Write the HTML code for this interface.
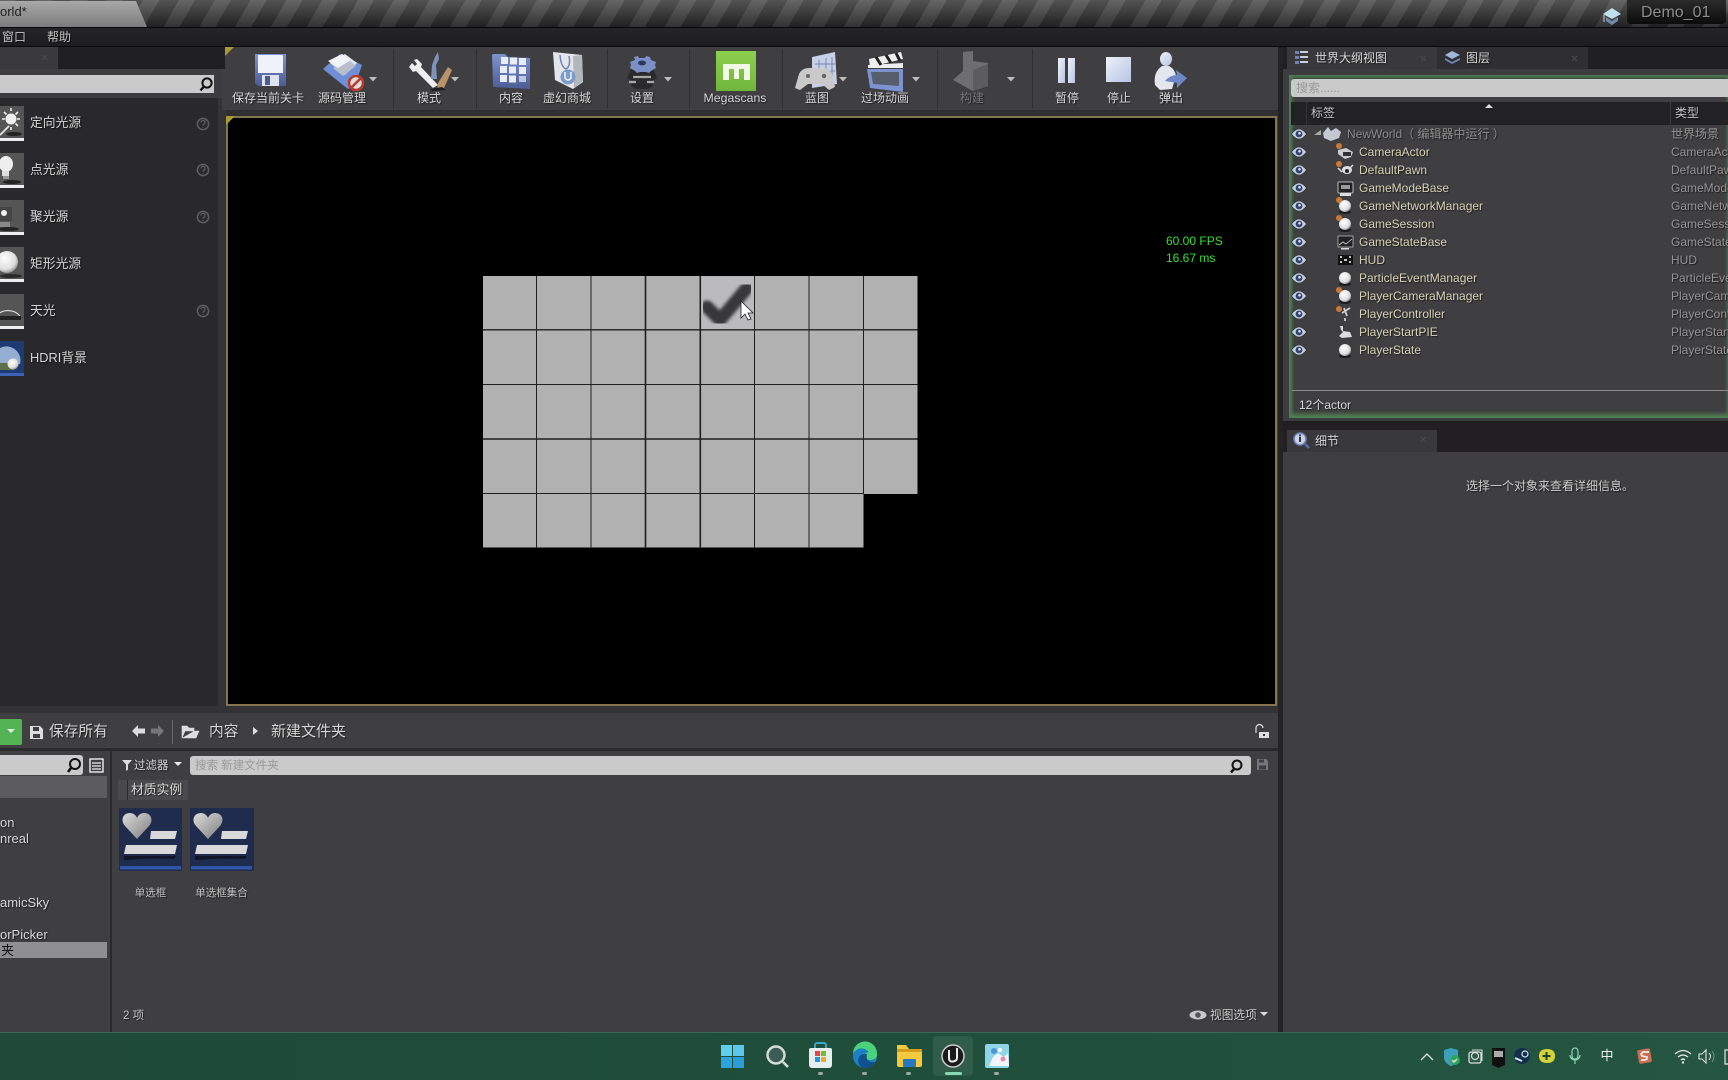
<!DOCTYPE html>
<html lang="zh"><head><meta charset="utf-8"><title>UE</title>
<style>
html,body{margin:0;padding:0;width:1728px;height:1080px;overflow:hidden;background:#3f3e40}
body{font-family:"Liberation Sans","Noto Sans CJK SC",sans-serif;font-size:12px;color:#d6d6d6}
#w{position:absolute;left:0;top:0;width:1728px;height:1080px;overflow:hidden;filter:blur(.35px)}
.b{position:absolute}
.t{position:absolute;white-space:nowrap;line-height:16px;margin-top:-8px;text-shadow:1px 1px 1px rgba(0,0,0,.55)}
.c{transform:translateX(-50%)}
.r{color:#d6d1b5;font-size:12px}
.y{color:#959595;font-size:12px}
svg{position:absolute;left:0;top:0}
</style></head><body><div id="w">
<!-- title bar -->
<div class="b" style="left:0;top:0;width:1728px;height:27px;background:repeating-linear-gradient(120deg,rgba(255,255,255,.07) 0 14px,rgba(0,0,0,.08) 14px 31px),linear-gradient(#5a5a5a,#232323)"></div>
<div class="b" style="left:0;top:27px;width:1728px;height:1px;background:#080808"></div>
<div class="b" style="left:0;top:28px;width:1728px;height:18px;background:linear-gradient(#252426,#1d1c1e)"></div>
<div class="b" style="left:0;top:46px;width:1728px;height:1px;background:#0a0a0a"></div>
<div class="b" style="left:0;top:1px;width:147px;height:26px;background:linear-gradient(#a8a8a8,#7c7c7c);clip-path:polygon(0 0,136px 0,147px 100%,0 100%)"></div>
<div class="b" style="left:1627px;top:0;width:99px;height:24px;border-radius:0 0 4px 4px;background:linear-gradient(#2b2b2b,#0c0c0c)"></div>
<!-- left -->
<div class="b" style="left:0;top:47px;width:225px;height:22px;background:#201f21"></div>
<div class="b" style="left:0;top:47px;width:58px;height:22px;background:#3a393b"></div>
<div class="b" style="left:0;top:69px;width:222px;height:643px;background:#3d3c3e"></div>
<div class="b" style="left:0;top:75px;width:214px;height:18px;background:#cbcacb"></div>
<div class="b" style="left:0;top:98px;width:218px;height:608px;background:#29282a"></div>
<div class="b" style="left:218px;top:98px;width:4px;height:608px;background:#343335"></div>
<!-- toolbar -->
<div class="b" style="left:225px;top:47px;width:1053px;height:63px;background:#3f3e40"></div>
<div class="b" style="left:225px;top:110px;width:1053px;height:6px;background:#2f2e30"></div>
<div class="b" style="left:393px;top:49px;width:1px;height:59px;background:#2f2e30"></div>
<div class="b" style="left:476px;top:49px;width:1px;height:59px;background:#2f2e30"></div>
<div class="b" style="left:607px;top:49px;width:1px;height:59px;background:#2f2e30"></div>
<div class="b" style="left:689px;top:49px;width:1px;height:59px;background:#2f2e30"></div>
<div class="b" style="left:782px;top:49px;width:1px;height:59px;background:#2f2e30"></div>
<div class="b" style="left:937px;top:49px;width:1px;height:59px;background:#2f2e30"></div>
<div class="b" style="left:1032px;top:49px;width:1px;height:59px;background:#2f2e30"></div>
<!-- viewport -->
<div class="b" style="left:226px;top:116px;width:1051px;height:590px;box-sizing:border-box;border:2px solid #85754e;background:#000"></div>
<div class="b" style="left:222px;top:110px;width:4px;height:604px;background:#343335"></div>
<div class="b" style="left:1278px;top:47px;width:5px;height:985px;background:#232224"></div>
<!-- right -->
<div class="b" style="left:1283px;top:47px;width:445px;height:22px;background:#201f21"></div>
<div class="b" style="left:1287px;top:47px;width:150px;height:22px;background:#39383a"></div>
<div class="b" style="left:1437px;top:47px;width:151px;height:22px;background:#2f2e30"></div>
<div class="b" style="left:1283px;top:69px;width:445px;height:352px;background:#3d3c3e"></div>
<div class="b" style="left:1289px;top:75px;width:439px;height:343px;background:#3f3e40;box-shadow:inset 3px 0 3px #4f7f55,inset 0 3px 2px #47704c,inset 0 -4px 4px #4f8453"></div>
<div class="b" style="left:1291px;top:79px;width:437px;height:18px;background:#cbcacb;border-radius:3px 0 0 3px"></div>
<div class="b" style="left:1291px;top:102px;width:437px;height:23px;background:#222123"></div>
<div class="b" style="left:1306px;top:102px;width:1px;height:23px;background:#323133"></div>
<div class="b" style="left:1670px;top:102px;width:1px;height:23px;background:#3a393b"></div>
<div class="b" style="left:1292px;top:390px;width:436px;height:1px;background:#8b8b8b"></div>
<div class="b" style="left:1283px;top:421px;width:445px;height:31px;background:#211f22"></div>
<div class="b" style="left:1287px;top:430px;width:150px;height:22px;background:#39383a"></div>
<div class="b" style="left:1283px;top:452px;width:445px;height:580px;background:#3f3e40"></div>
<!-- content browser -->
<div class="b" style="left:0;top:706px;width:1278px;height:7px;background:#333234"></div>
<div class="b" style="left:0;top:713px;width:1278px;height:35px;background:#3f3e40"></div>
<div class="b" style="left:0;top:748px;width:1278px;height:3px;background:#2a292b"></div>
<div class="b" style="left:0;top:751px;width:1278px;height:281px;background:#3f3e40"></div>
<div class="b" style="left:110px;top:751px;width:2px;height:281px;background:#2a292b"></div>
<div class="b" style="left:0;top:719px;width:22px;height:26px;background:#54b354;border-radius:0 2px 2px 0"></div>
<div class="b" style="left:172px;top:720px;width:1px;height:24px;background:#6a696b"></div>
<div class="b" style="left:0;top:755px;width:83px;height:20px;background:#cbcacb;border-radius:0 3px 3px 0"></div>
<div class="b" style="left:0;top:776px;width:107px;height:22px;background:#5c5b5d"></div>
<div class="b" style="left:0;top:942px;width:107px;height:16px;background:#8f8e90"></div>
<div class="b" style="left:190px;top:756px;width:1061px;height:19px;background:#cbcacb;border-radius:3px"></div>
<div class="b" style="left:118px;top:780px;width:70px;height:20px;background:#4a494b"></div>
<div class="b" style="left:127px;top:780px;width:1px;height:20px;background:#29282a"></div>
<!-- taskbar -->
<div class="b" style="left:0;top:1032px;width:1728px;height:48px;background:linear-gradient(90deg,#1e4a37,#1f4e3a 50%,#245642);border-top:1px solid #3a6a55;box-sizing:border-box"></div>
<div class="b" style="left:933px;top:1036px;width:40px;height:40px;border-radius:4px;background:#2f5d4a"></div>
<div class="b" style="left:945px;top:1072px;width:17px;height:3px;border-radius:2px;background:#84d8b4"></div>

<svg width="1728" height="1080" viewBox="0 0 1728 1080">
<defs>
<linearGradient id="bl" x1="0" y1="0" x2="0" y2="1"><stop offset="0" stop-color="#7d93cf"/><stop offset="1" stop-color="#4b5d95"/></linearGradient>
<linearGradient id="pa" x1="0" y1="0" x2="1" y2="1"><stop offset="0" stop-color="#eef1fa"/><stop offset="1" stop-color="#b7c4e3"/></linearGradient>
<linearGradient id="gr" x1="0" y1="0" x2="0" y2="1"><stop offset="0" stop-color="#8ccf4f"/><stop offset="1" stop-color="#70b63b"/></linearGradient>
<radialGradient id="ba" cx=".4" cy=".35" r=".7"><stop offset="0" stop-color="#fff"/><stop offset=".7" stop-color="#ddd"/><stop offset="1" stop-color="#888"/></radialGradient>
<linearGradient id="hr" x1="0" y1="0" x2="1" y2="1"><stop offset="0" stop-color="#dcdcdc"/><stop offset="1" stop-color="#7d7d7d"/></linearGradient>
<filter id="bl1"><feGaussianBlur stdDeviation="1.600"/></filter>
<g id="eye"><path d="M-7.500 0Q0-10 7.500 0Q0 10-7.500 0Z" fill="#c4cee2" stroke="#222" stroke-width=".6"/><circle r="3.400" fill="#30426f"/><circle r="1.300" cx=".5" cy="-.7" fill="#dfe6f5"/></g>
<g id="ball"><ellipse cy="6" cx="0" rx="6" ry="2" fill="#1c1c1c"/><circle r="6" fill="url(#ba)"/></g>
<path id="arr" d="M-4-2H4L0 2.500Z" fill="#bdbdbd"/>
<g id="help"><circle r="5.600" fill="none" stroke="#5e5d5f" stroke-width="1.500"/><path d="M-2-1.500A2 2 0 1 1 .6.3Q0 .7 0 2M0 3.200v.8" fill="none" stroke="#5e5d5f" stroke-width="1.200"/></g>
</defs>

<path d="M225 47h9l-9 9Z" fill="#a99a33"/><path d="M226 116h9l-9 9Z" fill="#a99a33"/>
<path d="M42 55l5 5m0-5l-5 5" stroke="#4a494b" stroke-width="1.200"/>
<circle cx="207" cy="83" r="4.600" fill="none" stroke="#111" stroke-width="2"/><path d="M203.500 87l-3 3.500" stroke="#111" stroke-width="2.400"/>

<!-- left thumbs -->
<rect x="0" y="106" width="24" height="35" fill="#555"/><rect x="0" y="138" width="24" height="3" fill="#eee"/>
<circle cx="11" cy="119" r="5.500" fill="#eee"/><path d="M11 108v3M11 127v3M20 119h-3M2 119h3M4 112l2.500 2.500M18 112l-2.500 2.500M18 126l-2.500-2.500M0 135l9-9" stroke="#eee" stroke-width="1.600"/><ellipse cx="14" cy="134" rx="8" ry="2" fill="#222"/>
<rect x="0" y="153" width="24" height="35" fill="#555"/><rect x="0" y="185" width="24" height="3" fill="#eee"/>
<ellipse cx="6" cy="164" rx="7" ry="8" fill="#eee"/><rect x="2" y="171" width="7" height="5" fill="#ddd"/><rect x="3" y="176" width="6" height="3" fill="#999"/><ellipse cx="12" cy="182" rx="9" ry="2" fill="#222"/>
<rect x="0" y="200" width="24" height="35" fill="#555"/><rect x="0" y="232" width="24" height="3" fill="#eee"/>
<rect x="0" y="207" width="12" height="14" fill="#333" opacity=".5"/><circle cx="4" cy="213" r="3" fill="#eee"/><path d="M0 222h10v5H0z" fill="#888"/><ellipse cx="8" cy="229" rx="11" ry="2" fill="#222"/>
<rect x="0" y="247" width="24" height="35" fill="#555"/><rect x="0" y="279" width="24" height="3" fill="#eee"/>
<circle cx="7" cy="262" r="11" fill="url(#ba)"/><ellipse cx="11" cy="276" rx="11" ry="2" fill="#2a2a2a"/>
<rect x="0" y="294" width="24" height="35" fill="#555"/><rect x="0" y="326" width="24" height="3" fill="#eee"/>
<path d="M-4 316a16 16 0 0 1 24 0" fill="none" stroke="#ddd" stroke-width="1.200"/><rect x="0" y="316" width="21" height="4" fill="#222"/>
<rect x="0" y="341" width="24" height="35" fill="#1d3a72"/><rect x="0" y="373" width="24" height="3" fill="#3d62b8"/>
<path d="M0 348a14 14 0 0 1 20 16H0Z" fill="#93aed0"/><rect x="0" y="363" width="14" height="7" fill="#5b7049"/><circle cx="13" cy="364" r="5.500" fill="url(#ba)"/>
<use href="#help" x="203" y="124"/><use href="#help" x="203" y="170"/><use href="#help" x="203" y="217"/><use href="#help" x="203" y="311"/>

<!-- save -->
<path d="M255 54h31v32h-28l-3-3Z" fill="url(#bl)"/><path d="M258 55h24l1 1v17h-25Z" fill="#f0f2f9"/><rect x="262" y="75" width="17" height="11" fill="#dfe3ee"/><rect x="265" y="76" width="5" height="9" fill="#4b5d95"/>
<!-- source -->
<path d="M323 69l17-15 22 11-7 20-7 4Z" fill="#6f90d8"/><path d="M330 63l15-9 12 9-12 12Z" fill="#e3e6ec"/><path d="M333 68l15-9 8 7-13 10Z" fill="#b8bfcc"/><path d="M328 61l14-7 9 6-13 8Z" fill="#f2f3f6"/>
<circle cx="356" cy="83" r="7" fill="#dcdcdc" stroke="#b83c2c" stroke-width="2.600"/><path d="M351 88l10-10" stroke="#b83c2c" stroke-width="2.600"/>
<use href="#arr" x="373" y="79"/>
<!-- modes -->
<path d="M412 63l-3 4 4 5 3-1 17 17 5-3-17-18 1-3-5-5-3 1 3 4-2 2Z" fill="#eee"/>
<path d="M431 79l1-14 3-8 3-5 1 7-3 6 1 14Z" fill="#7d93b8"/><path d="M438 83l10-16 4 3-8 18-7 2Z" fill="#b9946a"/><path d="M430 89l12-2 4 3-14 1Z" fill="#1e1e1e"/>
<use href="#arr" x="455" y="79"/>
<!-- content -->
<path d="M492 55l1-1h12l3 3 22 1v31l-37-2Z" fill="url(#bl)"/><g fill="#e8ecf6"><rect x="501" y="57" width="7" height="7"/><rect x="510" y="57.500" width="7" height="7"/><rect x="519" y="58" width="7" height="7"/><rect x="500" y="66" width="7" height="7"/><rect x="509" y="66.500" width="7" height="7"/><rect x="519" y="67" width="7" height="7"/><rect x="500" y="75" width="7" height="7"/><rect x="509" y="75.500" width="7" height="7"/><rect x="519" y="76" width="7" height="6" opacity=".7"/></g>
<!-- market -->
<path d="M553 52l29 3 1 27-10 7-18-9Z" fill="#e3e5ea"/><path d="M573 56l1 32 9-7-1-26Z" fill="#b3b6bd"/><circle cx="568" cy="77" r="7.500" fill="#7d9cc9"/><path d="M565 72v6q3 4 6 0v-6" fill="none" stroke="#eef2f8" stroke-width="1.500"/><path d="M560 55q1 12 6 14 5-3 3-13" fill="none" stroke="#6e83b4" stroke-width="1.500"/>
<!-- settings -->
<path d="M631 69l-4 9 5 3-1 5 5 3h12l5-3-1-5 5-3-4-9Z" fill="#2a2a2c"/><path d="M633 77h18M629 82h7M647 82h7" stroke="#a8a8a8" stroke-width="2.200"/>
<path d="M634 57l4-1 1 2h6l1-2 4 1 1 3 5 2-1 3 1 3-5 3-2 2-3-1h-6l-3 1-2-2-5-3 1-3-1-3 5-2Z" fill="#7a90c6"/><ellipse cx="642" cy="63" rx="4" ry="2.500" fill="#2d3a5e"/>
<use href="#arr" x="668" y="79"/>
<!-- Megascans -->
<rect x="716" y="51" width="40" height="40" fill="url(#gr)"/><path d="M723 64h27v16h-6V69h-5v10h-5V69h-5v11h-6Z" fill="#f2f7e6"/>
<!-- blueprint -->
<path d="M812 57l23-5 2 32-25 4Z" fill="#c7d0e6"/><path d="M819 60v18M826 58v20M832 57v20M815 64h20M815 71h20" stroke="#7486b4" stroke-width=".9"/>
<path d="M799 74q3-6 10-6h14q7 0 9 6l3 13-6 3-7-6h-14l-8 6-5-2Z" fill="#c9c9c9"/><circle cx="808" cy="76" r="2" fill="#666"/><circle cx="824" cy="76" r="2.200" fill="#666"/>
<use href="#arr" x="843" y="79"/>
<!-- cinematic -->
<path d="M867 69h36v23l-33-4Z" fill="#7d93cf"/><path d="M871 72h28v14l-26-2Z" fill="#565d6b"/><path d="M869 59l32-7 2 7-33 8ZM868 65l35-2v5h-35Z" fill="#eee"/><path d="M876 57l5 8M886 55l5 8M896 53l4 8" stroke="#222" stroke-width="3"/>
<use href="#arr" x="916" y="79"/>
<!-- build -->
<path d="M963 52l10-1v10l15 2v23l-15 5-20-11 10-9Z" fill="#6e6d70"/><path d="M973 70v21l15-5V64Z" fill="#5c5b5e"/>
<use href="#arr" x="1011" y="79"/>
<!-- pause stop -->
<rect x="1058" y="58" width="7" height="25" fill="url(#pa)"/><rect x="1068" y="58" width="7" height="25" fill="url(#pa)"/>
<rect x="1106" y="57" width="25" height="25" fill="url(#pa)"/>
<!-- eject -->
<ellipse cx="1166" cy="59" rx="6" ry="7" fill="url(#pa)"/><path d="M1155 85q-2-13 7-19h7q6 3 7 10l-4 13-12 1Z" fill="#e3e6ef"/><path d="M1165 81q5-6 12-6l-1-5 11 8-10 10v-5q-6-1-12-2Z" fill="#6e87c6"/>

<!-- viewport grid -->
<rect x="483" y="276" width="434.500" height="271.500" fill="#b1b1b1"/>
<rect x="863.500" y="494" width="55" height="55" fill="#000"/>
<rect x="701" y="277" width="53" height="52" fill="#bbbbbe"/>
<g stroke="#1f1f1f" stroke-width="1">
<path d="M536.500 276v272M591 276v272"/><path d="M645.500 276v272M700.300 276v272" stroke-width="1.600"/><path d="M754.500 276v272M809 276v272M863.500 276v218"/>
<path d="M483 329.800h434.500" stroke-width="1.400"/><path d="M483 384.500h434.500"/><path d="M483 439h434.500" stroke-width="1.400"/><path d="M483 493.500h381"/>
</g>
<path d="M707 307l13 13 27-32" fill="none" stroke="#38383b" stroke-width="13" stroke-linecap="round" filter="url(#bl1)"/>
<path d="M741 301v17l4-4 3 6 3-1-3-6h5Z" fill="#fff" stroke="#222" stroke-width=".8"/>

<!-- cap -->
<path d="M1603 14l9-6 9 6-9 5Z" fill="#bfe0ec"/><path d="M1606 17v4l6 4 6-4v-4l-6 4Z" fill="#6e8aab"/><path d="M1604 15v7" stroke="#ccc"/>
<!-- tab icons -->
<g fill="#6d83b8"><rect x="1295" y="51" width="4" height="3"/><rect x="1295" y="56" width="4" height="3"/><rect x="1295" y="61" width="4" height="3"/></g><g fill="#c9cfdb"><rect x="1300" y="51" width="8" height="2"/><rect x="1300" y="56" width="8" height="2"/><rect x="1300" y="61" width="8" height="2"/></g>
<path d="M1445 55l7-4 8 4-8 4Z" fill="#9fb7dc"/><path d="M1445 58l7 4 8-4v2l-8 4-7-4Z" fill="#6f88b8"/>
<path d="M1421 56l5 5m0-5l-5 5" stroke="#4a494b" stroke-width="1.200"/>
<path d="M1572 56l5 5m0-5l-5 5" stroke="#4a494b" stroke-width="1.200"/>
<path d="M1485 108l4-4 4 4Z" fill="#ddd"/>
<!-- details tab icon -->
<circle cx="1300" cy="439" r="6" fill="#c7d0e6" stroke="#6d83b8" stroke-width="1.500"/><path d="M1305 444l4 4" stroke="#5870a8" stroke-width="2.500"/><rect x="1299" y="437" width="2" height="5" fill="#333"/><rect x="1299" y="434.500" width="2" height="1.800" fill="#333"/>
<path d="M1421 437l5 5m0-5l-5 5" stroke="#4a494b" stroke-width="1.200"/>
<!-- outliner rows -->
<use href="#eye" x="1299" y="134"/><use href="#eye" x="1299" y="152"/><use href="#eye" x="1299" y="170"/><use href="#eye" x="1299" y="188"/><use href="#eye" x="1299" y="206"/><use href="#eye" x="1299" y="224"/><use href="#eye" x="1299" y="242"/><use href="#eye" x="1299" y="260"/><use href="#eye" x="1299" y="278"/><use href="#eye" x="1299" y="296"/><use href="#eye" x="1299" y="314"/><use href="#eye" x="1299" y="332"/><use href="#eye" x="1299" y="350"/>
<path d="M1314 135l7-5v5Z" fill="#aaa"/>
<path d="M1323 133l5-6 3 4 5-3 5 4-2 6-8 3-7-3Z" fill="#c4c8d2"/>
<path d="M1338 150l8-2 7 4-2 5-6 2-7-5Z" fill="#ccc"/><circle cx="1339" cy="146" r="3" fill="#c77a3a"/><rect x="1343" y="152" width="8" height="4" fill="#333"/>
<circle cx="1339" cy="164" r="3" fill="#c77a3a"/><ellipse cx="1347" cy="170" rx="5" ry="4" fill="#ddd"/><circle cx="1347" cy="171" r="2" fill="#222"/><path d="M1338 168l4 4M1353 165l-3 3" stroke="#ddd" stroke-width="1.500"/>
<rect x="1338" y="182" width="15" height="11" rx="1" fill="#222" stroke="#bbb"/><rect x="1341" y="185" width="9" height="4" fill="#999"/><rect x="1340" y="193" width="11" height="3" fill="#ddd"/>
<use href="#ball" x="1345" y="206"/><circle cx="1339" cy="200" r="3" fill="#c77a3a"/><use href="#ball" x="1345" y="224"/><circle cx="1339" cy="218" r="3" fill="#c77a3a"/>
<rect x="1338" y="236" width="15" height="11" fill="#222" stroke="#bbb" stroke-width=".8"/><path d="M1339 245l4-3 3 2 6-5" fill="none" stroke="#ddd" stroke-width=".8"/><rect x="1341" y="248" width="8" height="1.500" fill="#ddd"/>
<rect x="1338" y="255" width="15" height="10" fill="#111"/><path d="M1340 257h2M1349 257h2M1340 262h2M1349 262h2M1344 260h3" stroke="#fff" stroke-width="1.500"/>
<use href="#ball" x="1345" y="278"/><use href="#ball" x="1345" y="296"/><circle cx="1339" cy="290" r="3" fill="#c77a3a"/>
<circle cx="1339" cy="309" r="3" fill="#c77a3a"/><path d="M1342 313l8-5M1344 308l3 8M1345 318v3" stroke="#ccc" stroke-width="1.800"/>
<path d="M1340 326h3v5l7 1 2 5-10 1-3-2 4-4-2-2Z" fill="#ddd"/>
<use href="#ball" x="1345" y="350"/>
<!-- content browser icons -->
<path d="M7 729h8l-4 4Z" fill="#dff3df"/>
<path d="M30 726h10l3 3v10H30Zm3 1v4h6v-4Zm0 7v4h7v-4Z" fill="#ddd" fill-rule="evenodd"/>
<path d="M132 731l6-6v3.500h7v5h-7v3.500Z" fill="#ddd"/><path d="M164 731l-6-6v3.500h-7v5h7v3.500Z" fill="#777"/>
<path d="M182 738v-12h5l2 2h5v3h-9l-3 7h14l3-7h-5" fill="#ddd" stroke="#ddd" stroke-width=".6"/><path d="M253 727l5 4-5 4Z" fill="#ddd"/>
<path d="M1256 733v-5a3.500 3.500 0 0 1 7 0" fill="none" stroke="#ddd" stroke-width="1.200"/><rect x="1259" y="732" width="10" height="6" fill="#ddd"/><rect x="1263" y="734" width="2" height="2" fill="#333"/>
<circle cx="75" cy="764" r="5" fill="none" stroke="#111" stroke-width="2"/><path d="M71 768l-3 4" stroke="#111" stroke-width="2.600"/>
<rect x="90" y="759" width="13" height="13" fill="none" stroke="#eee" stroke-width="1.400"/><path d="M92 763h9M92 766h9M92 769h9" stroke="#eee" stroke-width="1.200"/>
<path d="M122 760h10l-4 4.500v5l-2 1.500v-6.500Z" fill="#ddd"/><path d="M174 762h8l-4 4Z" fill="#eee"/>
<circle cx="1237" cy="765" r="4.500" fill="none" stroke="#111" stroke-width="2"/><path d="M1234 769l-3 3.500" stroke="#111" stroke-width="2.500"/>
<path d="M1257 759h9l2 2v9h-11Zm2 .500v3h5v-3Zm0 6v4h7v-4Z" fill="#77767a" fill-rule="evenodd"/>
<!-- thumbs -->
<rect x="119" y="808" width="63" height="63" fill="#1f2c4d"/><rect x="120" y="866" width="61" height="3.500" fill="#2f55a8"/>
<rect x="190" y="808" width="64" height="63" fill="#1f2c4d"/><rect x="191" y="866" width="61" height="3.500" fill="#2f55a8"/>
<g id="th"><path d="M137 839L125 826C120 820 123 813 130 813C133 813 136 815 137 818C138 815 141 813 144 813C151 813 154 820 149 826Z" fill="url(#hr)"/><path d="M151 831h26l-2 8h-25Z" fill="#d9d9dc"/><path d="M126 845h51l-2 9h-51Z" fill="#d9d9dc"/><path d="M124 856h52l-2 3q-25-1-50 1Z" fill="#101626"/></g>
<use href="#th" x="71"/>
<ellipse cx="1198" cy="1015" rx="8.500" ry="4.500" fill="#c9c9c9"/><circle cx="1198" cy="1015" r="2.800" fill="#555"/>
<path d="M1260 1012h8l-4 4Z" fill="#ddd"/>
<rect x="1278" y="706" width="5" height="326" fill="#232224"/>
<!-- taskbar icons -->
<rect x="721" y="1045" width="11" height="11" fill="#5dd0f0"/><rect x="733" y="1045" width="11" height="11" fill="#5cc8ec"/><rect x="721" y="1057" width="11" height="11" fill="#2ba6dc"/><rect x="733" y="1057" width="11" height="11" fill="#2a9ed8"/>
<circle cx="776" cy="1055" r="8.500" fill="#3c5d55" stroke="#d8dcd8" stroke-width="2.400"/><path d="M783 1062l5 5" stroke="#d8dcd8" stroke-width="2.600"/>
<path d="M811 1048h19a2 2 0 0 1 2 2v15a3 3 0 0 1-3 3h-17a3 3 0 0 1-3-3v-15a2 2 0 0 1 2-2Z" fill="#e6eef0"/><path d="M815 1048v-3a2 2 0 0 1 2-2h7a2 2 0 0 1 2 2v3" fill="none" stroke="#36a6c6" stroke-width="2"/>
<rect x="815" y="1051" width="5" height="5" fill="#e44"/><rect x="821" y="1051" width="5" height="5" fill="#7b3"/><rect x="815" y="1057" width="5" height="5" fill="#29d"/><rect x="821" y="1057" width="5" height="5" fill="#ea3"/>
<circle cx="865" cy="1056" r="12" fill="#1d80c4"/><path d="M853 1054a12 12 0 0 1 24-1q1 6-6 7-7 0-7-4 0-3 5-4-5-5-11-3-4 2-5 5Z" fill="#49d17b"/><path d="M858 1060q2-7 9-6-2 9 8 8-3 6-10 6-6 0-7-8Z" fill="#11508c"/>
<path d="M897 1045h9l3 4h13v16a2 2 0 0 1-2 2h-21a2 2 0 0 1-2-2Z" fill="#f4c93c"/><rect x="897" y="1049" width="25" height="3" fill="#d29d1e"/><rect x="903" y="1059" width="13" height="8" rx="1" fill="#2479c2"/>
<circle cx="953" cy="1056" r="11" fill="#1a1a1a" stroke="#ccc" stroke-width="1.500"/><path d="M949 1050v8q0 4 4 3.500t4-3.500v-10" fill="none" stroke="#eee" stroke-width="2"/>
<rect x="985" y="1044" width="24" height="24" rx="2" fill="#8fd5e8"/><path d="M989 1066l4-9 5-4 6 4 4-4 1 13Z" fill="#f2f6fc"/><circle cx="994" cy="1051" r="3" fill="#4b97d8"/><circle cx="1003" cy="1059" r="2.500" fill="#e88ba8"/><circle cx="1000" cy="1050" r="2" fill="#fff"/>
<g fill="#9aa9a3"><rect x="818" y="1072" width="5" height="3" rx="1.500"/><rect x="862" y="1072" width="5" height="3" rx="1.500"/><rect x="906" y="1072" width="5" height="3" rx="1.500"/><rect x="994" y="1072" width="5" height="3" rx="1.500"/></g>
<!-- tray -->
<path d="M1421 1060l6-6 6 6" fill="none" stroke="#e6e6e6" stroke-width="1.300"/>
<path d="M1444 1050l7-2 7 2v7q0 6-7 9-7-3-7-9Z" fill="#3d9fb9"/><circle cx="1455" cy="1060" r="5" fill="#2da55a"/><path d="M1452 1060l2 2 3-3" stroke="#fff" fill="none" stroke-width="1.200"/>
<rect x="1469" y="1052" width="12" height="11" rx="2" fill="#2b5a47" stroke="#ddd" stroke-width="1.300"/><circle cx="1475" cy="1056" r="3.500" fill="none" stroke="#ddd" stroke-width="1.200"/><path d="M1472 1050h10v11" fill="none" stroke="#ddd"/>
<path d="M1492 1048h13v17l-6.500 3-6.500-3Z" fill="#101010"/><rect x="1494" y="1051" width="9" height="6" fill="#ddd" opacity=".75"/>
<circle cx="1522" cy="1056" r="8" fill="#10304e"/><circle cx="1525" cy="1054" r="3" fill="none" stroke="#d9e4ee" stroke-width="1.200"/><path d="M1515 1058l7 3" stroke="#d9e4ee" stroke-width="2"/>
<path d="M1539 1056q0-7 8-7 8 0 8 7 0 7-8 7-8 0-8-7Z" fill="#d3d337"/><path d="M1546.500 1052v8M1542.500 1056h8" stroke="#1f3f2f" stroke-width="2"/>
<rect x="1572" y="1048" width="6" height="11" rx="3" fill="none" stroke="#8fd6b4" stroke-width="1.200"/><path d="M1570 1055a5 5 0 0 0 10 0M1575 1060v4" fill="none" stroke="#8fd6b4" stroke-width="1.200"/>
<rect x="1638" y="1049" width="13" height="14" rx="2" fill="#c96d53" transform="rotate(-10 1645 1056)"/><path d="M1649 1052h-6l-2 2 1 2 5 1v2l-2 1h-4" fill="none" stroke="#f2ece7" stroke-width="1.700"/>
<path d="M1675 1054q8-7 16 0M1678 1057q5-4 10 0M1681 1060q2-2 4 0" fill="none" stroke="#e6e6e6" stroke-width="1.300"/><circle cx="1683" cy="1062.500" r="1.200" fill="#e6e6e6"/>
<path d="M1699 1054h3l4-4v13l-4-4h-3Z" fill="none" stroke="#e6e6e6" stroke-width="1.100"/><path d="M1709 1053q3 3 0 7" fill="none" stroke="#e6e6e6"/><path d="M1712 1051q4 5 0 11" fill="none" stroke="#6f8f80"/>
<path d="M1725 1050h5v14h-5Z" fill="none" stroke="#e6e6e6" stroke-width="1.200"/>
</svg>

<!-- texts -->
<div class="t" style="left:0;top:12px;color:#222;font-size:13px;text-shadow:none">orld*</div>
<div class="t" style="left:1641px;top:13px;color:#8d8d8d;font-size:16px">Demo_01</div>
<div class="t" style="left:2px;top:37px;color:#c4c4c4">窗口</div>
<div class="t" style="left:47px;top:37px;color:#c4c4c4">帮助</div>
<div class="t" style="left:30px;top:123px;font-size:12.800px">定向光源</div>
<div class="t" style="left:30px;top:170px;font-size:12.800px">点光源</div>
<div class="t" style="left:30px;top:217px;font-size:12.800px">聚光源</div>
<div class="t" style="left:30px;top:264px;font-size:12.800px">矩形光源</div>
<div class="t" style="left:30px;top:311px;font-size:12.800px">天光</div>
<div class="t" style="left:30px;top:358px;font-size:12.800px">HDRI背景</div>
<div class="t c" style="left:268px;top:98px">保存当前关卡</div>
<div class="t c" style="left:342px;top:98px">源码管理</div>
<div class="t c" style="left:429px;top:98px">模式</div>
<div class="t c" style="left:511px;top:98px">内容</div>
<div class="t c" style="left:567px;top:98px">虚幻商城</div>
<div class="t c" style="left:642px;top:98px">设置</div>
<div class="t c" style="left:735px;top:98px;font-size:12.300px">Megascans</div>
<div class="t c" style="left:817px;top:98px">蓝图</div>
<div class="t c" style="left:885px;top:98px">过场动画</div>
<div class="t c" style="left:972px;top:98px;color:#777">构建</div>
<div class="t c" style="left:1067px;top:98px">暂停</div>
<div class="t c" style="left:1119px;top:98px">停止</div>
<div class="t c" style="left:1171px;top:98px">弹出</div>
<div class="t" style="left:1166px;top:241px;color:#35e035;text-shadow:none">60.00 FPS</div>
<div class="t" style="left:1166px;top:258px;color:#35e035;text-shadow:none">16.67 ms</div>
<div class="t" style="left:1315px;top:58px">世界大纲视图</div>
<div class="t" style="left:1466px;top:58px">图层</div>
<div class="t" style="left:1296px;top:88px;color:#999;text-shadow:none">搜索......</div>
<div class="t" style="left:1311px;top:113px;color:#c4c4c4">标签</div>
<div class="t" style="left:1675px;top:113px;color:#c4c4c4">类型</div>
<div class="t" style="left:1347px;top:134px;color:#8c8c8c;font-size:12px">NewWorld（ 编辑器中运行 ）</div>
<div class="t y" style="left:1671px;top:134px">世界场景</div>
<div class="t r" style="left:1359px;top:152px">CameraActor</div><div class="t y" style="left:1671px;top:152px">CameraActor</div>
<div class="t r" style="left:1359px;top:170px">DefaultPawn</div><div class="t y" style="left:1671px;top:170px">DefaultPawn</div>
<div class="t r" style="left:1359px;top:188px">GameModeBase</div><div class="t y" style="left:1671px;top:188px">GameModeBase</div>
<div class="t r" style="left:1359px;top:206px">GameNetworkManager</div><div class="t y" style="left:1671px;top:206px">GameNetworkManager</div>
<div class="t r" style="left:1359px;top:224px">GameSession</div><div class="t y" style="left:1671px;top:224px">GameSession</div>
<div class="t r" style="left:1359px;top:242px">GameStateBase</div><div class="t y" style="left:1671px;top:242px">GameStateBase</div>
<div class="t r" style="left:1359px;top:260px">HUD</div><div class="t y" style="left:1671px;top:260px">HUD</div>
<div class="t r" style="left:1359px;top:278px">ParticleEventManager</div><div class="t y" style="left:1671px;top:278px">ParticleEventManager</div>
<div class="t r" style="left:1359px;top:296px">PlayerCameraManager</div><div class="t y" style="left:1671px;top:296px">PlayerCameraManager</div>
<div class="t r" style="left:1359px;top:314px">PlayerController</div><div class="t y" style="left:1671px;top:314px">PlayerController</div>
<div class="t r" style="left:1359px;top:332px">PlayerStartPIE</div><div class="t y" style="left:1671px;top:332px">PlayerStartPIE</div>
<div class="t r" style="left:1359px;top:350px">PlayerState</div><div class="t y" style="left:1671px;top:350px">PlayerState</div>
<div class="t" style="left:1299px;top:405px;font-size:12px">12个actor</div>
<div class="t" style="left:1315px;top:441px">细节</div>
<div class="t c" style="left:1550px;top:486px;color:#cdcdcd;font-size:12px">选择一个对象来查看详细信息。</div>
<div class="t" style="left:49px;top:732px;font-size:14.700px">保存所有</div>
<div class="t" style="left:209px;top:732px;font-size:14.700px">内容</div>
<div class="t" style="left:271px;top:732px;font-size:15px">新建文件夹</div>
<div class="t" style="left:134px;top:766px;font-size:11.500px">过滤器</div>
<div class="t" style="left:195px;top:766px;color:#999;text-shadow:none;font-size:11.500px">搜索 新建文件夹</div>
<div class="t" style="left:131px;top:790px;font-size:12.800px">材质实例</div>
<div class="t" style="left:0;top:823px;font-size:13px">on</div>
<div class="t" style="left:0;top:839px;font-size:13px">nreal</div>
<div class="t" style="left:0;top:903px;font-size:13px">amicSky</div>
<div class="t" style="left:0;top:935px;font-size:13px">orPicker</div>
<div class="t" style="left:1px;top:951px;font-size:13px;color:#111;text-shadow:none">夹</div>
<div class="t c" style="left:150.500px;top:893px;font-size:10.500px;color:#c4c4c4">单选框</div>
<div class="t c" style="left:221.500px;top:893px;font-size:10.500px;color:#c4c4c4">单选框集合</div>
<div class="t" style="left:123px;top:1016px;color:#c4c4c4;font-size:11.500px">2 项</div>
<div class="t" style="left:1210px;top:1016px;font-size:11.700px;color:#cdcdcd">视图选项</div>
<div class="t c" style="left:1607px;top:1056px;color:#eee;font-size:13px;text-shadow:none">中</div>
</div></body></html>
